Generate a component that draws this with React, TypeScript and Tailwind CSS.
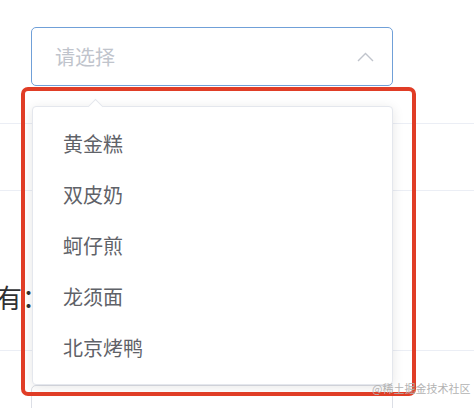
import React from 'react';

const items = ['黄金糕', '双皮奶', '蚵仔煎', '龙须面', '北京烤鸭'];

function Chevron() {
  return (
    <svg width="17" height="10" viewBox="0 0 17 10" fill="none" className="shrink-0">
      <path d="M1 9 L8.5 1.5 L16 9" stroke="#c0c4cc" strokeWidth="1.4" />
    </svg>
  );
}

export default function App() {
  return (
    <div
      className="relative w-[474px] h-[408px] overflow-hidden bg-white"
      style={{ fontFamily: '"Noto Sans CJK SC", "Noto Sans", sans-serif' }}
    >
      {/* page behind the dropdown */}
      <div className="pt-[27px]">
        <div className="ml-[31px] w-[362px] h-[59px] rounded-[5px] border border-[#70a0d8] flex items-center justify-between pl-[23px] pr-[18px]">
          <span className="text-[20px] text-[#c0c4cc]">请选择</span>
          <Chevron />
        </div>
        <div className="h-[38px] border-b border-[#ebeef5]" />
        <div className="h-[67px] border-b border-[#ebeef5]" />
        <div className="h-[160px] border-b border-[#ebeef5] flex items-start pt-[91px]">
          <span className="ml-[-4px] text-[26px] leading-[30px] text-[#303133]">有：</span>
        </div>
        <div className="mt-[34px] ml-[31px] w-[362px] h-[40px] rounded-[5px] border border-[#dcdfe6]" />
      </div>

      {/* dropdown */}
      <div className="absolute left-[32px] top-[106px] w-[361px] rounded-[4px] border border-[#e4e7ed] bg-white py-[11px] shadow-[0_2px_12px_rgba(0,0,0,0.1)]">
        <div className="absolute left-[57px] -top-[6px] w-[11px] h-[11px] rotate-45 border-l border-t border-[#e4e7ed] bg-white" />
        <ul className="relative">
          {items.map((it) => (
            <li key={it} className="h-[51px] flex items-center pl-[30px] text-[20px] text-[#5f6268]">
              {it}
            </li>
          ))}
        </ul>
      </div>

      {/* highlight frame */}
      <div className="absolute left-[21px] top-[87px] w-[395px] h-[309px] rounded-[7px] border-[4px] border-[#e03d26]" />

      <div className="absolute left-[372px] top-[380px] text-[11px] text-[#b3b3b3] leading-[16px]">
        @稀土掘金技术社区
      </div>
    </div>
  );
}
